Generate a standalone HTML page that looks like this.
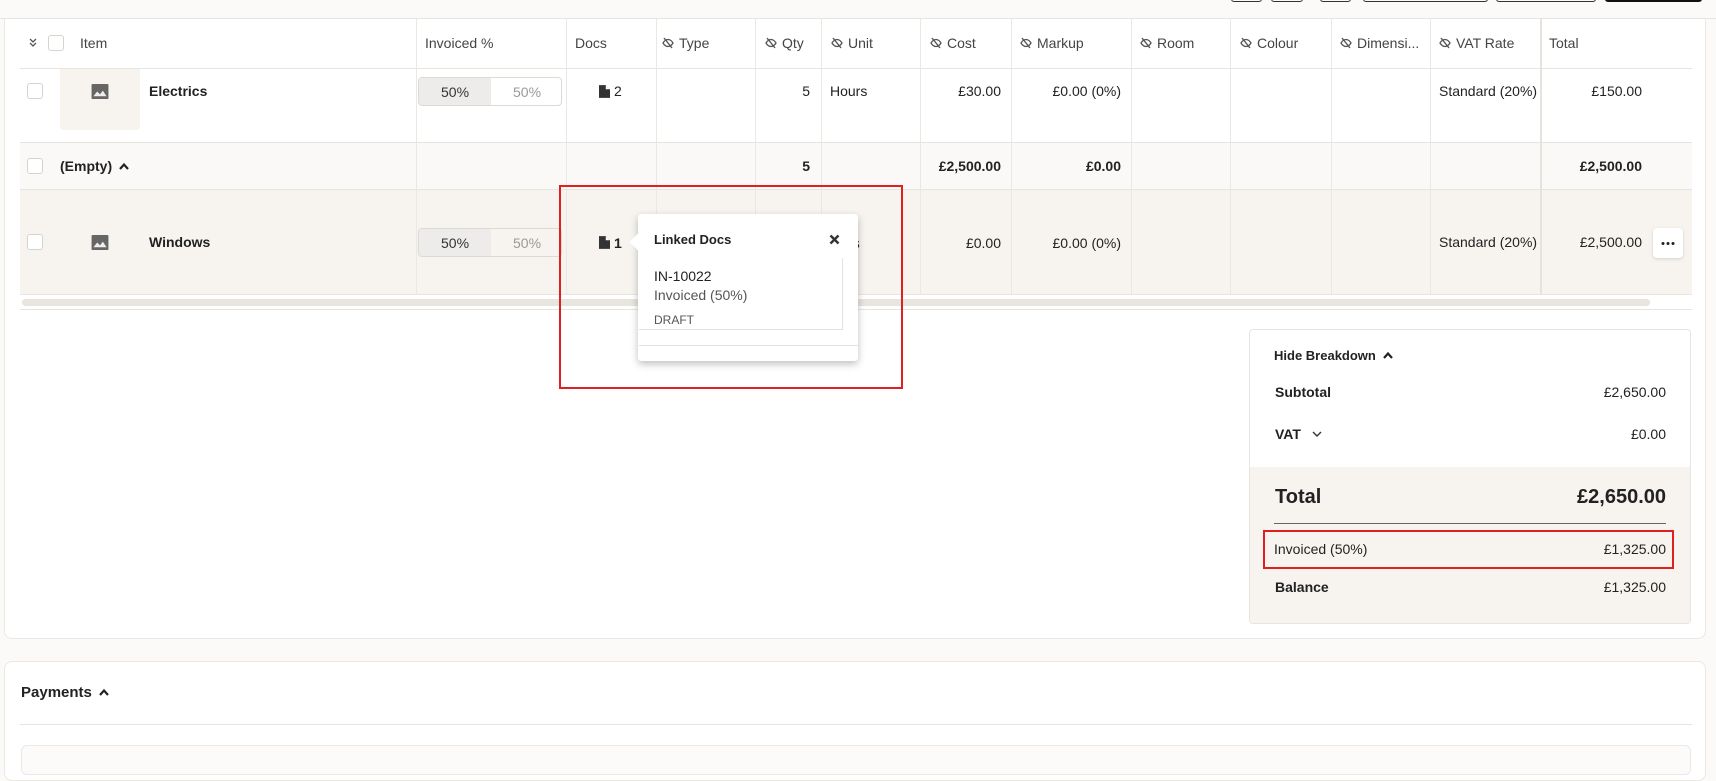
<!DOCTYPE html>
<html><head><meta charset="utf-8"><style>
*{box-sizing:border-box;margin:0;padding:0}
body{width:1716px;height:754px;overflow:hidden;background:#fbfaf8;font-family:"Liberation Sans",sans-serif;font-size:14px;color:#222;position:relative}
.a{position:absolute}
.t{position:absolute;line-height:18px;white-space:nowrap}
.r{text-align:right}
.vl{position:absolute;width:1px;background:#ebe8e3}
.hl{position:absolute;height:1px;background:#e8e5e0}
.cb{position:absolute;width:16px;height:16px;border:1px solid #d6d3ce;border-radius:3px;background:#fff}
.h{color:#444}
.eye{display:inline-block;width:12px;height:12px;vertical-align:-1px;margin-right:5px}
.ch{display:inline-block;width:12px;height:10px;vertical-align:0;margin-left:6px}
</style></head><body>
<svg width="0" height="0" style="position:absolute"><defs>
<symbol id="e" viewBox="0 0 12 12"><path d="M1 6c1.5-2.5 3-3.5 5-3.5S9.5 3.5 11 6c-1.5 2.5-3 3.5-5 3.5S2.5 8.5 1 6z" fill="none" stroke="#555" stroke-width="1.3"/><path d="M2 1l8 10" stroke="#555" stroke-width="1.4"/></symbol>
<symbol id="up" viewBox="0 0 12 10"><path d="M2 8l4-4.5L10 8" fill="none" stroke="#222" stroke-width="2.2"/></symbol>
<symbol id="dn" viewBox="0 0 12 10"><path d="M2 3l4 4 4-4" fill="none" stroke="#333" stroke-width="1.4"/></symbol>
<symbol id="img" viewBox="0 0 18 16"><rect x="0" y="0" width="18" height="16" rx="1" fill="#666"/><path d="M2 13l4-5 3 3 3-4 4 6z" fill="#eee"/><rect x="1.5" y="1.5" width="15" height="13" fill="none" stroke="#666"/></symbol>
<symbol id="doc" viewBox="0 0 12 14"><path d="M0 0h7l5 5v9H0z" fill="#333"/><path d="M7 0v5h5" fill="#fff" stroke="#333" stroke-width="0.8"/></symbol>
</defs></svg>
<!-- top buttons -->
<div class="a" style="left:1231px;top:-10px;width:31px;height:12px;border:1px solid #333;border-radius:3px"></div>
<div class="a" style="left:1271px;top:-10px;width:32px;height:12px;border:1px solid #333;border-radius:3px"></div>
<div class="a" style="left:1320px;top:-10px;width:31px;height:12px;border:1px solid #333;border-radius:3px"></div>
<div class="a" style="left:1363px;top:-10px;width:125px;height:12px;border:1px solid #333;border-radius:3px"></div>
<div class="a" style="left:1496px;top:-10px;width:100px;height:12px;border:1px solid #333;border-radius:3px"></div>
<div class="a" style="left:1605px;top:-10px;width:97px;height:12px;background:#111;border-radius:3px"></div>

<div class="a" style="left:4px;top:18px;width:1702px;height:621px;background:#fff;border:1px solid #ebe8e3;border-top:none;border-radius:0 0 8px 8px"></div>
<div class="hl" style="left:0;top:18px;width:1716px"></div>

<div class="a" style="left:20px;top:142px;width:1672px;height:47px;background:#faf9f7"></div>
<div class="a" style="left:20px;top:189px;width:1672px;height:105px;background:#f7f4ef"></div>
<div class="a" style="left:60px;top:68px;width:80px;height:62px;background:#f7f4ef;border-radius:3px"></div>
<div class="hl" style="left:20px;top:68px;width:1672px"></div>
<div class="hl" style="left:20px;top:142px;width:1672px"></div>
<div class="hl" style="left:20px;top:189px;width:1672px"></div>
<div class="hl" style="left:20px;top:294px;width:1672px"></div>

<div class="vl" style="left:416px;top:18px;height:276px"></div>
<div class="vl" style="left:566px;top:18px;height:276px"></div>
<div class="vl" style="left:656px;top:18px;height:276px"></div>
<div class="vl" style="left:755px;top:18px;height:276px"></div>
<div class="vl" style="left:821px;top:18px;height:276px"></div>
<div class="vl" style="left:920px;top:18px;height:276px"></div>
<div class="vl" style="left:1011px;top:18px;height:276px"></div>
<div class="vl" style="left:1131px;top:18px;height:276px"></div>
<div class="vl" style="left:1230px;top:18px;height:276px"></div>
<div class="vl" style="left:1331px;top:18px;height:276px"></div>
<div class="vl" style="left:1430px;top:18px;height:276px"></div>
<div class="a" style="left:1540px;top:18px;width:2px;height:276px;background:#e6e2dc"></div>

<!-- header -->
<svg class="a" style="left:28px;top:37px" width="10" height="12" viewBox="0 0 10 12"><path d="M2 2l3 3 3-3M2 6l3 3 3-3" fill="none" stroke="#555" stroke-width="1.3"/></svg>
<div class="cb" style="left:48px;top:35px"></div>
<div class="t h" style="left:80px;top:34px">Item</div>
<div class="t h" style="left:425px;top:34px">Invoiced %</div>
<div class="t h" style="left:575px;top:34px">Docs</div>
<div class="t h" style="left:662px;top:34px"><svg class="eye"><use href="#e"/></svg>Type</div>
<div class="t h" style="left:765px;top:34px"><svg class="eye"><use href="#e"/></svg>Qty</div>
<div class="t h" style="left:831px;top:34px"><svg class="eye"><use href="#e"/></svg>Unit</div>
<div class="t h" style="left:930px;top:34px"><svg class="eye"><use href="#e"/></svg>Cost</div>
<div class="t h" style="left:1020px;top:34px"><svg class="eye"><use href="#e"/></svg>Markup</div>
<div class="t h" style="left:1140px;top:34px"><svg class="eye"><use href="#e"/></svg>Room</div>
<div class="t h" style="left:1240px;top:34px"><svg class="eye"><use href="#e"/></svg>Colour</div>
<div class="t h" style="left:1340px;top:34px"><svg class="eye"><use href="#e"/></svg>Dimensi...</div>
<div class="t h" style="left:1439px;top:34px"><svg class="eye"><use href="#e"/></svg>VAT Rate</div>
<div class="t h" style="left:1549px;top:34px">Total</div>

<!-- Electrics -->
<div class="cb" style="left:27px;top:83px"></div>
<svg class="a" style="left:91px;top:84px" width="18" height="15"><use href="#img"/></svg>
<div class="t" style="left:149px;top:82px;font-weight:bold">Electrics</div>
<div class="a" style="left:418px;top:77px;width:144px;height:29px;border:1px solid #ddd9d3;border-radius:4px;background:#fff;overflow:hidden">
 <div class="a" style="left:0;top:0;width:72px;height:27px;background:#eeecea"></div>
 <div class="t" style="left:22px;top:5px;color:#333">50%</div>
 <div class="t" style="left:94px;top:5px;color:#999">50%</div>
</div>
<svg class="a" style="left:599px;top:85px" width="11" height="13"><use href="#doc"/></svg>
<div class="t" style="left:614px;top:82px">2</div>
<div class="t r" style="left:760px;top:82px;width:50px">5</div>
<div class="t" style="left:830px;top:82px">Hours</div>
<div class="t r" style="left:900px;top:82px;width:101px">£30.00</div>
<div class="t r" style="left:1000px;top:82px;width:121px">£0.00 (0%)</div>
<div class="t" style="left:1439px;top:82px">Standard (20%)</div>
<div class="t r" style="left:1540px;top:82px;width:102px">£150.00</div>

<!-- Empty -->
<div class="cb" style="left:27px;top:158px"></div>
<div class="t" style="left:60px;top:157px;font-weight:bold">(Empty)<svg class="ch"><use href="#up"/></svg></div>
<div class="t r" style="left:760px;top:157px;width:50px;font-weight:bold">5</div>
<div class="t r" style="left:880px;top:157px;width:121px;font-weight:bold">£2,500.00</div>
<div class="t r" style="left:1000px;top:157px;width:121px;font-weight:bold">£0.00</div>
<div class="t r" style="left:1520px;top:157px;width:122px;font-weight:bold">£2,500.00</div>

<!-- Windows -->
<div class="cb" style="left:27px;top:234px"></div>
<svg class="a" style="left:91px;top:235px" width="18" height="15"><use href="#img"/></svg>
<div class="t" style="left:149px;top:233px;font-weight:bold">Windows</div>
<div class="a" style="left:418px;top:228px;width:144px;height:29px;border:1px solid #ddd9d3;border-radius:4px;background:#f7f4ef;overflow:hidden">
 <div class="a" style="left:0;top:0;width:72px;height:27px;background:#eeecea"></div>
 <div class="t" style="left:22px;top:5px;color:#333">50%</div>
 <div class="t" style="left:94px;top:5px;color:#999">50%</div>
</div>
<svg class="a" style="left:599px;top:236px" width="11" height="13"><use href="#doc"/></svg>
<div class="t" style="left:614px;top:234px;font-weight:bold">1</div>
<div class="t" style="left:845px;top:234px">es</div>
<div class="t r" style="left:900px;top:234px;width:101px">£0.00</div>
<div class="t r" style="left:1000px;top:234px;width:121px">£0.00 (0%)</div>
<div class="t" style="left:1439px;top:233px">Standard (20%)</div>
<div class="t r" style="left:1520px;top:233px;width:122px">£2,500.00</div>
<div class="a" style="left:1653px;top:228px;width:30px;height:30px;background:#fff;border-radius:4px;box-shadow:0 1px 3px rgba(0,0,0,.15)">
 <svg class="a" style="left:8px;top:14px" width="14" height="3"><circle cx="2" cy="1.5" r="1.5" fill="#222"/><circle cx="7" cy="1.5" r="1.5" fill="#222"/><circle cx="12" cy="1.5" r="1.5" fill="#222"/></svg>
</div>

<div class="a" style="left:22px;top:299px;width:1628px;height:7px;background:#e8e4de;border-radius:4px"></div>
<div class="hl" style="left:20px;top:309px;width:1672px"></div>

<!-- popup -->
<div class="a" style="left:559px;top:185px;width:344px;height:204px;border:2px solid #e02020"></div>
<div class="a" style="left:638px;top:214px;width:220px;height:147px;background:#fff;border-radius:3px;box-shadow:0 3px 8px rgba(0,0,0,.25)"></div>
<div class="a" style="left:632px;top:236px;width:12px;height:12px;background:#fff;transform:rotate(45deg)"></div>
<div class="t" style="left:654px;top:231px;font-size:13px;font-weight:bold">Linked Docs</div>
<svg class="a" style="left:829px;top:234px" width="11" height="11" viewBox="0 0 11 11"><path d="M1.5 1.5l8 8M9.5 1.5l-8 8" stroke="#333" stroke-width="2.4"/></svg>
<div class="a" style="left:639px;top:258px;width:204px;height:72px;border-right:1px solid #e5e2dd;border-bottom:1px solid #e5e2dd"></div>
<div class="hl" style="left:639px;top:345px;width:219px;background:#e5e2dd"></div>
<div class="t" style="left:654px;top:267px;font-size:14px">IN-10022</div>
<div class="t" style="left:654px;top:286px;font-size:14px;color:#555">Invoiced (50%)</div>
<div class="t" style="left:654px;top:311px;font-size:12px;color:#555">DRAFT</div>

<!-- breakdown -->
<div class="a" style="left:1249px;top:329px;width:442px;height:295px;background:#fff;border:1px solid #e8e5e0;border-radius:4px;overflow:hidden">
 <div class="a" style="left:0;top:137px;width:442px;height:158px;background:#f7f4ef"></div>
</div>
<div class="t" style="left:1274px;top:347px;font-size:13px;font-weight:bold">Hide Breakdown<svg class="ch"><use href="#up"/></svg></div>
<div class="t" style="left:1275px;top:383px;font-weight:bold">Subtotal</div>
<div class="t r" style="left:1500px;top:383px;width:166px">£2,650.00</div>
<div class="t" style="left:1275px;top:425px;font-weight:bold">VAT<svg class="ch" style="margin-left:10px"><use href="#dn"/></svg></div>
<div class="t r" style="left:1500px;top:425px;width:166px">£0.00</div>
<div class="t" style="left:1275px;top:485px;font-size:20px;line-height:24px;font-weight:bold">Total</div>
<div class="t r" style="left:1466px;top:485px;width:200px;font-size:20px;line-height:24px;font-weight:bold">£2,650.00</div>
<div class="a" style="left:1274px;top:523px;width:392px;height:1px;background:#666"></div>
<div class="a" style="left:1263px;top:530px;width:411px;height:39px;border:2px solid #e02020"></div>
<div class="t" style="left:1274px;top:540px">Invoiced (50%)</div>
<div class="t r" style="left:1500px;top:540px;width:166px">£1,325.00</div>
<div class="t" style="left:1275px;top:578px;font-weight:bold">Balance</div>
<div class="t r" style="left:1500px;top:578px;width:166px">£1,325.00</div>

<!-- payments -->
<div class="a" style="left:4px;top:661px;width:1702px;height:120px;background:#fff;border:1px solid #ebe8e3;border-radius:8px"></div>
<div class="t" style="left:21px;top:684px;font-size:15px;font-weight:bold;color:#222">Payments<svg class="ch"><use href="#up"/></svg></div>
<div class="hl" style="left:20px;top:724px;width:1672px"></div>
<div class="a" style="left:21px;top:745px;width:1670px;height:30px;border:1px solid #ebe8e3;border-radius:6px;background:#fcfbfa"></div>
</body></html>
